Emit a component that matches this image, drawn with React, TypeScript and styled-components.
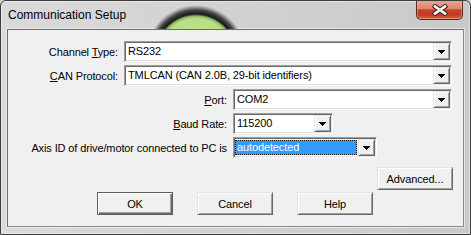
import React from 'react'
import styled, { createGlobalStyle } from 'styled-components'

const GlobalStyle = createGlobalStyle`
  html, body {
    margin: 0;
    padding: 0;
    background: #cfcfcf;
  }
`

export const Window = styled('div')`
  background: linear-gradient(to right, #dadada, #c9c9c9);
  border: 1px solid #3c3c3c;
  border-radius: 6px 6px 1px 1px;
  box-shadow: inset 0 0 0 1px rgba(255, 255, 255, 0.45);
  box-sizing: border-box;
  display: flex;
  flex-direction: column;
  font-family: "Liberation Sans", Arial, sans-serif;
  height: 235px;
  overflow: hidden;
  width: 471px;
`

export const TitleBar = styled('div')`
  align-items: flex-start;
  display: flex;
  flex: 0 0 28px;
  padding: 0 7px;
  position: relative;
`

const Backdrop = styled('svg')`
  left: 0;
  pointer-events: none;
  position: absolute;
  top: 0;
`

export const Title = styled('span')`
  color: #000;
  font-size: 12px;
  line-height: 28px;
  position: relative;
`

export const CloseButton = styled('div')`
  align-items: center;
  background: linear-gradient(
    to bottom,
    #eaa898 0%,
    #dc8672 45%,
    #c8442a 52%,
    #c23a20 78%,
    #d9674a 100%
  );
  border: 1px solid #5a2820;
  border-radius: 0 0 5px 5px;
  border-top: none;
  box-shadow: inset 0 0 0 1px rgba(255, 220, 210, 0.35);
  box-sizing: border-box;
  display: flex;
  height: 20px;
  justify-content: center;
  margin-left: auto;
  margin-top: -1px;
  position: relative;
  width: 47px;
`

export const FrameBody = styled('div')`
  display: flex;
  flex: 1;
  padding: 0 6px 7px 6px;
`

export const Client = styled('div')`
  background: #f0f0f0;
  border: 1px solid;
  border-color: #6c6c6c #8c8c8c #8c8c8c #6c6c6c;
  box-shadow: 0 0 0 1px rgba(255, 255, 255, 0.5);
  display: flex;
  flex: 1;
  flex-direction: column;
  letter-spacing: -0.12px;
`

export const Fields = styled('div')`
  display: flex;
  flex-direction: column;
  gap: 3px;
  padding-top: 11px;
`

export const FieldRow = styled('div')`
  align-items: center;
  display: flex;
  height: 21px;
`

interface ILabel {
  $width: number
}
export const Label = styled('label')<ILabel>`
  color: #000;
  font-size: 11px;
  margin-right: 6px;
  text-align: right;
  white-space: nowrap;
  width: ${(props) => props.$width}px;
`

interface ICombo {
  $width: number
}
export const ComboBox = styled('div')<ICombo>`
  background: #fff;
  border: 1px solid;
  border-color: #a0a0a0 #ffffff #ffffff #a0a0a0;
  box-shadow: inset 1px 1px 0 #696969, inset -1px -1px 0 #e3e3e3;
  box-sizing: border-box;
  display: flex;
  height: 21px;
  padding: 1px;
  width: ${(props) => props.$width}px;
`

export const ComboText = styled('div')`
  color: #000;
  flex: 1;
  font-size: 11px;
  line-height: 17px;
  overflow: hidden;
  padding-left: 2px;
  white-space: nowrap;
`

export const SelectedText = styled('div')`
  background: linear-gradient(#3399ff, #3399ff) padding-box, #e0882a;
  border: 1px dotted #111;
  color: #fff;
  flex: 1;
  font-size: 11px;
  line-height: 13px;
  margin: 1px 1px 1px 0;
  padding-left: 1px;
  white-space: nowrap;
`

export const DropButton = styled('div')`
  align-items: center;
  background: #f0f0f0;
  border: 1px solid;
  border-color: #e3e3e3 #696969 #696969 #e3e3e3;
  box-shadow: inset 1px 1px 0 #fff, inset -1px -1px 0 #a0a0a0;
  box-sizing: border-box;
  display: flex;
  justify-content: center;
  width: 17px;
`

export const AdvancedRow = styled('div')`
  display: flex;
  justify-content: flex-end;
  margin-top: 9px;
  padding-right: 10px;
`

export const ButtonRow = styled('div')`
  display: flex;
  gap: 24px;
  margin-top: 2px;
  padding-left: 89px;
`

interface IButton {
  $default?: boolean
}
export const PushButton = styled('div')<IButton>`
  align-items: center;
  background: #f0f0f0;
  border: 1px solid;
  border-color: ${(props) =>
    props.$default ? '#5e5e5e' : '#e3e3e3 #696969 #696969 #e3e3e3'};
  box-shadow: ${(props) =>
    props.$default
      ? 'inset 1px 1px 0 #fff, inset -1px -1px 0 #696969, inset -2px -2px 0 #a0a0a0'
      : 'inset 1px 1px 0 #fff, inset -1px -1px 0 #a0a0a0'};
  box-sizing: border-box;
  color: #000;
  display: flex;
  font-size: 11px;
  height: 23px;
  justify-content: center;
  width: 76px;
`

const Arrow = () => (
  <svg width="7" height="4" viewBox="0 0 7 4" shapeRendering="crispEdges">
    <path d="M0 0h7v1H0z M1 1h5v1H1z M2 2h3v1H2z M3 3h1v1H3z" fill="#000" />
  </svg>
)

const CloseGlyph = () => (
  <svg width="16" height="12" viewBox="0 0 16 12">
    <path
      d="M3 2.5 L13 9.5 M13 2.5 L3 9.5"
      stroke="#4a2a26"
      strokeWidth="4.6"
      strokeLinecap="square"
      fill="none"
    />
    <path
      d="M3 2.5 L13 9.5 M13 2.5 L3 9.5"
      stroke="#fff"
      strokeWidth="2.6"
      strokeLinecap="square"
      fill="none"
    />
  </svg>
)

const Glow = () => (
  <Backdrop width="469" height="28">
    <defs>
      <radialGradient id="orb" cx="195" cy="54" r="50" gradientUnits="userSpaceOnUse">
        <stop offset="0" stopColor="#c9ea9c" />
        <stop offset="0.73" stopColor="#b7de86" />
        <stop offset="0.78" stopColor="#8cb464" />
        <stop offset="0.82" stopColor="#181818" />
        <stop offset="0.9" stopColor="#222" stopOpacity="0.8" />
        <stop offset="1" stopColor="#444" stopOpacity="0" />
      </radialGradient>
    </defs>
    <circle cx="195" cy="54" r="50" fill="url(#orb)" />
  </Backdrop>
)

interface IField {
  label: React.ReactNode
  labelWidth: number
  width: number
  value: string
  selected?: boolean
}
const Field = ({ label, labelWidth, width, value, selected }: IField) => (
  <FieldRow>
    <Label $width={labelWidth}>{label}</Label>
    <ComboBox $width={width}>
      {selected ? <SelectedText>{value}</SelectedText> : <ComboText>{value}</ComboText>}
      <DropButton>
        <Arrow />
      </DropButton>
    </ComboBox>
  </FieldRow>
)

export default function App() {
  return (
    <>
      <GlobalStyle />
      <Window>
        <TitleBar>
          <Glow />
          <Title>Communication Setup</Title>
          <CloseButton>
            <CloseGlyph />
          </CloseButton>
        </TitleBar>
        <FrameBody>
          <Client>
            <Fields>
              <Field
                label={<>Channel <u>T</u>ype:</>}
                labelWidth={110}
                width={328}
                value="RS232"
              />
              <Field
                label={<><u>C</u>AN Protocol:</>}
                labelWidth={110}
                width={328}
                value="TMLCAN (CAN 2.0B, 29-bit identifiers)"
              />
              <Field
                label={<><u>P</u>ort:</>}
                labelWidth={219}
                width={219}
                value="COM2"
              />
              <Field
                label={<><u>B</u>aud Rate:</>}
                labelWidth={219}
                width={100}
                value="115200"
              />
              <Field
                label="Axis ID of drive/motor connected to PC is"
                labelWidth={219}
                width={144}
                value="autodetected"
                selected
              />
            </Fields>
            <AdvancedRow>
              <PushButton>Advanced...</PushButton>
            </AdvancedRow>
            <ButtonRow>
              <PushButton $default>OK</PushButton>
              <PushButton>Cancel</PushButton>
              <PushButton>Help</PushButton>
            </ButtonRow>
          </Client>
        </FrameBody>
      </Window>
    </>
  )
}
